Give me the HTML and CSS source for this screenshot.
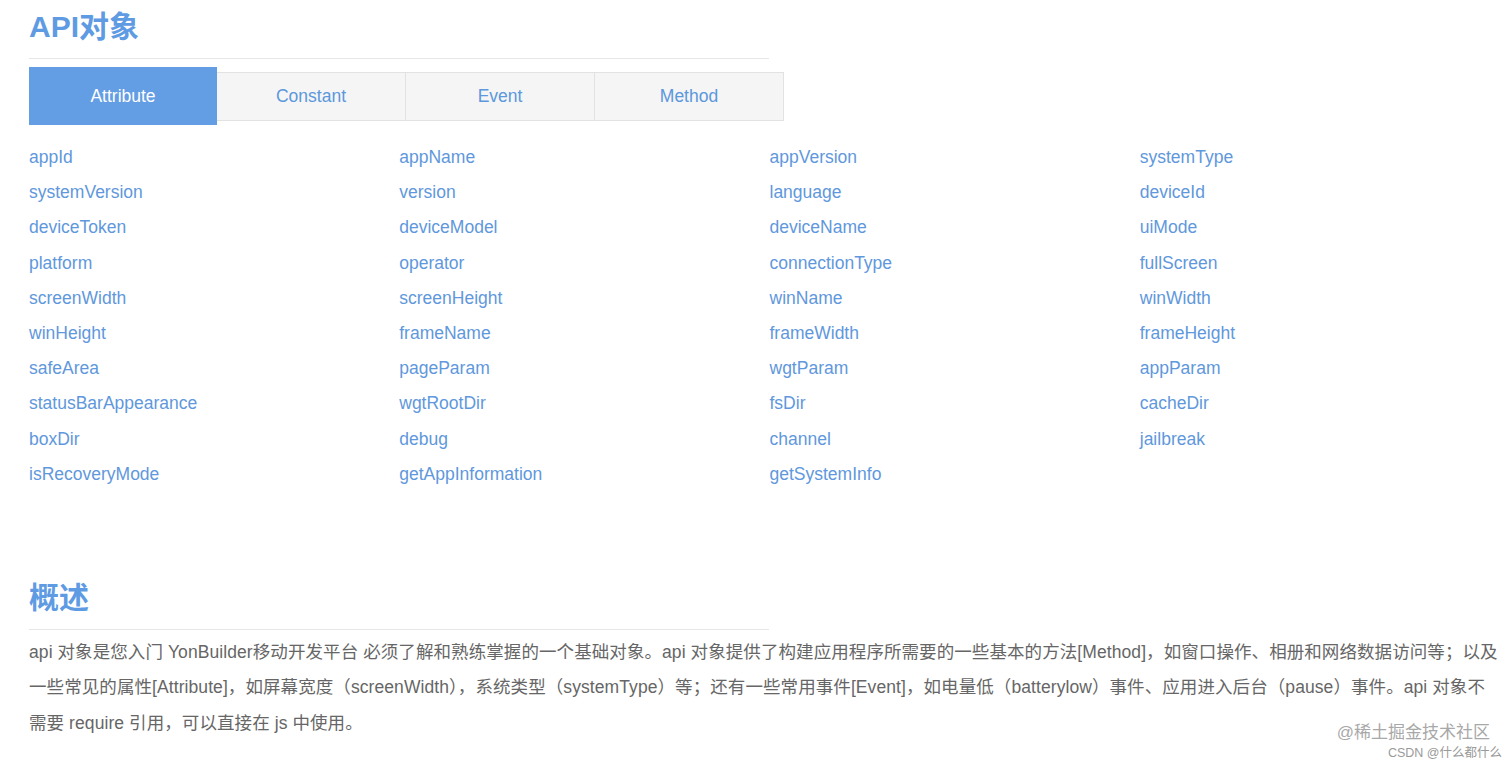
FILE: index.html
```html
<!DOCTYPE html>
<html lang="zh-CN">
<head>
<meta charset="utf-8">
<title>API对象</title>
<link rel="stylesheet" href="styles.css">
</head>
<body>
<div class="page">
  <h1 class="section-title">API对象</h1>
  <div class="tabs">
    <div class="tab active">Attribute</div>
    <div class="tab">Constant</div>
    <div class="tab">Event</div>
    <div class="tab">Method</div>
  </div>
  <ul class="attr-grid">
    <li><a>appId</a></li><li><a>appName</a></li><li><a>appVersion</a></li><li><a>systemType</a></li>
    <li><a>systemVersion</a></li><li><a>version</a></li><li><a>language</a></li><li><a>deviceId</a></li>
    <li><a>deviceToken</a></li><li><a>deviceModel</a></li><li><a>deviceName</a></li><li><a>uiMode</a></li>
    <li><a>platform</a></li><li><a>operator</a></li><li><a>connectionType</a></li><li><a>fullScreen</a></li>
    <li><a>screenWidth</a></li><li><a>screenHeight</a></li><li><a>winName</a></li><li><a>winWidth</a></li>
    <li><a>winHeight</a></li><li><a>frameName</a></li><li><a>frameWidth</a></li><li><a>frameHeight</a></li>
    <li><a>safeArea</a></li><li><a>pageParam</a></li><li><a>wgtParam</a></li><li><a>appParam</a></li>
    <li><a>statusBarAppearance</a></li><li><a>wgtRootDir</a></li><li><a>fsDir</a></li><li><a>cacheDir</a></li>
    <li><a>boxDir</a></li><li><a>debug</a></li><li><a>channel</a></li><li><a>jailbreak</a></li>
    <li><a>isRecoveryMode</a></li><li><a>getAppInformation</a></li><li><a>getSystemInfo</a></li>
  </ul>
  <h1 class="section-title overview">概述</h1>
  <p class="desc">api 对象是您入门 YonBuilder移动开发平台 必须了解和熟练掌握的一个基础对象。api 对象提供了构建应用程序所需要的一些基本的方法[Method]，如窗口操作、相册和网络数据访问等；以及一些常见的属性[Attribute]，如屏幕宽度（screenWidth），系统类型（systemType）等；还有一些常用事件[Event]，如电量低（batterylow）事件、应用进入后台（pause）事件。api 对象不需要 require 引用，可以直接在 js 中使用。</p>
</div>
<div class="watermark">
  <div class="wm-main">@稀土掘金技术社区</div>
  <div class="wm-sub">CSDN @什么都什么</div>
</div>
</body>
</html>
```

FILE: styles.css
```css
html, body {
  margin: 0;
  padding: 0;
  background: #ffffff;
}

body {
  font-family: "Liberation Sans", "Noto Sans CJK SC", sans-serif;
  color: #666666;
}

.page {
  padding: 0 2px 0 29px;
}

.section-title {
  width: 740px;
  margin: 7px 0 0 0;
  padding: 0 0 11px 0;
  font-size: 30px;
  line-height: 40px;
  font-weight: bold;
  color: #5f9be3;
  border-bottom: 1px solid #e6e6e6;
}

.tabs {
  display: flex;
  align-items: center;
  margin-top: 8px;
  width: 755px;
}

.tab {
  box-sizing: border-box;
  width: 189px;
  height: 49px;
  display: flex;
  align-items: center;
  justify-content: center;
  font-size: 17.5px;
  color: #5b98dc;
  background: #f5f5f5;
  border: 1px solid #e2e2e2;
  border-left: none;
}

.tab.active {
  width: 188px;
  height: 58px;
  background: #639de3;
  color: #ffffff;
  border: none;
}

.attr-grid {
  list-style: none;
  margin: 15px 0 0 0;
  padding: 0;
  display: grid;
  grid-template-columns: repeat(4, 1fr);
  grid-auto-rows: 35.2px;
  align-items: center;
}

.attr-grid li {
  font-size: 17.5px;
  line-height: 35.2px;
}

.attr-grid a {
  color: #5f98dc;
  text-decoration: none;
}

.section-title.overview {
  margin-top: 86px;
}

.desc {
  max-width: 1473px;
  margin: 5px 0 0 0;
  font-size: 17.5px;
  line-height: 35.6px;
  letter-spacing: 0.08px;
  color: #666666;
}

.watermark {
  position: absolute;
  right: 10px;
  top: 720px;
  display: flex;
  flex-direction: column;
  align-items: flex-end;
}

.wm-main {
  font-size: 17px;
  line-height: 25px;
  color: #a8a8a8;
  margin-right: 12px;
}

.wm-sub {
  font-size: 12.5px;
  line-height: 17px;
  color: #9a9a9a;
}
```
